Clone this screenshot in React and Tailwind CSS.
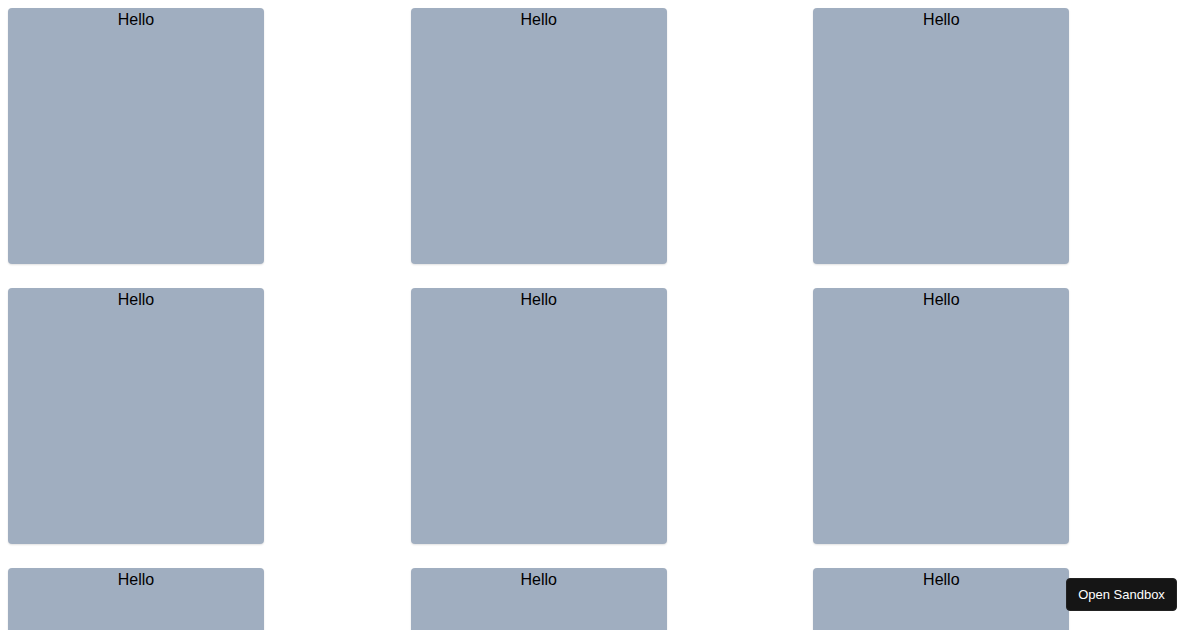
import React from 'react';

const cards = Array.from({ length: 9 }, (_, i) => i);

const App = () => {
    return (
        <div className="min-h-screen bg-white p-2 font-['Liberation_Sans',Arial,sans-serif] text-black">
            {/* Card grid */}
            <div className="grid grid-cols-3 gap-6">
                {cards.map((i) => (
                    <div
                        key={i}
                        className="w-64 h-64 rounded bg-[#a0aec0] shadow-[0_1px_2px_rgba(0,0,0,0.12)] text-center text-base leading-6"
                    >
                        Hello
                    </div>
                ))}
            </div>

            {/* Sandbox button */}
            <button
                type="button"
                className="fixed right-[23px] bottom-[19px] w-[111px] h-[33px] rounded-[4px] bg-[#151515] border border-[#222] text-[13px] text-white font-['Liberation_Sans',Arial,sans-serif]"
            >
                Open Sandbox
            </button>
        </div>
    );
};

export default App;
